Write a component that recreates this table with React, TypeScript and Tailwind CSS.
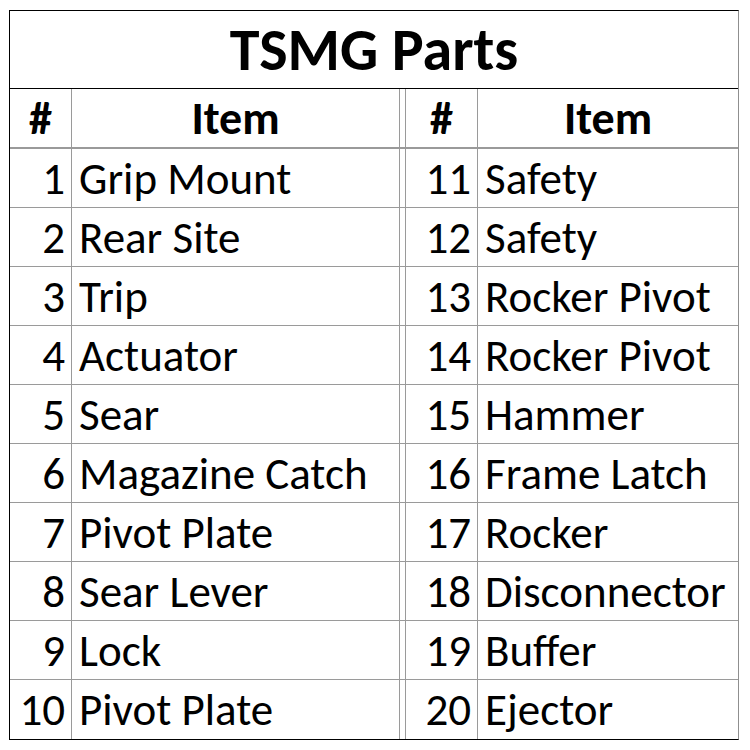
const left = ["Grip Mount", "Rear Site", "Trip", "Actuator", "Sear", "Magazine Catch", "Pivot Plate", "Sear Lever", "Lock", "Pivot Plate"]
const right = ["Safety", "Safety", "Rocker Pivot", "Rocker Pivot", "Hammer", "Frame Latch", "Rocker", "Disconnector", "Buffer", "Ejector"]

export default function App() {
  return (
    <div className="w-[750px] h-[750px] bg-white pl-[9px] pt-[10px] text-black" style={{ fontFamily: "Carlito, Lato, sans-serif" }}>
      <div className="w-[730px] border border-black border-r-[#8f8f8f]">
        {/* Title */}
        <div className="h-[78px] border-b border-black flex items-center justify-center">
          <span className="text-[60px] font-bold leading-none">TSMG Parts</span>
        </div>

        {/* Header */}
        <div className="h-[60px] flex border-b-2 border-[#9a9a9a] font-bold text-[46px] leading-none">
          <div className="w-[62px] border-r border-[#9a9a9a] flex items-center justify-center">#</div>
          <div className="w-[328px] border-r border-[#9a9a9a] flex items-center justify-center">Item</div>
          <div className="w-[6px] border-r border-[#9a9a9a]" />
          <div className="w-[72px] border-r border-[#9a9a9a] flex items-center justify-center">#</div>
          <div className="flex-1 flex items-center justify-center">Item</div>
        </div>

        {/* Rows */}
        {left.map((item, i) => (
          <div key={i} className={`h-[59px] flex text-[45px] leading-none ${i < 9 ? "border-b border-[#9a9a9a]" : ""}`}>
            <div className="w-[62px] border-r border-[#9a9a9a] flex items-center justify-end pr-[6px]">{i + 1}</div>
            <div className="w-[328px] border-r border-[#9a9a9a] flex items-center pl-[7px] whitespace-nowrap">{item}</div>
            <div className="w-[6px] border-r border-[#9a9a9a]" />
            <div className="w-[72px] border-r border-[#9a9a9a] flex items-center justify-end pr-[6px]">{i + 11}</div>
            <div className="flex-1 flex items-center pl-[7px] whitespace-nowrap">{right[i]}</div>
          </div>
        ))}
      </div>
    </div>
  )
}
